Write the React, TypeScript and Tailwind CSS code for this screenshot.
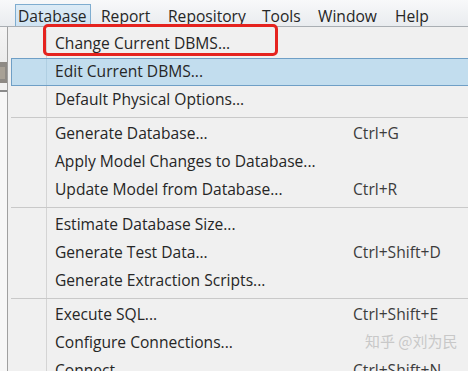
import React from "react";

type Item = { label: string; shortcut?: string; highlight?: boolean } | { sep: true; h: number };

const items: Item[] = [
  { label: "Change Current DBMS..." },
  { label: "Edit Current DBMS...", highlight: true },
  { label: "Default Physical Options..." },
  { sep: true, h: 6 },
  { label: "Generate Database...", shortcut: "Ctrl+G" },
  { label: "Apply Model Changes to Database..." },
  { label: "Update Model from Database...", shortcut: "Ctrl+R" },
  { sep: true, h: 7 },
  { label: "Estimate Database Size..." },
  { label: "Generate Test Data...", shortcut: "Ctrl+Shift+D" },
  { label: "Generate Extraction Scripts..." },
  { sep: true, h: 6 },
  { label: "Execute SQL...", shortcut: "Ctrl+Shift+E" },
  { label: "Configure Connections..." },
  { label: "Connect", shortcut: "Ctrl+Shift+N" },
];

const menus = [
  { t: "Database", w: "w-[84px]", active: true },
  { t: "Report", w: "w-[67px]" },
  { t: "Repository", w: "w-[94px]" },
  { t: "Tools", w: "w-[56px]" },
  { t: "Window", w: "w-[77px]" },
  { t: "Help", w: "w-[45px]" },
];

export default function App() {
  const font = { fontFamily: '"Open Sans", "Noto Sans", "Noto Sans CJK SC", sans-serif' };
  return (
    <div className="relative w-[468px] h-[371px] overflow-hidden bg-[#f0f0f0] text-[15.6px] text-[#262626]" style={font}>
      {/* menu bar */}
      <div className="flex h-[27px] items-end pl-[15px] bg-gradient-to-b from-[#f8f9fa] to-[#e9ecef] border-b border-[#a9aeb3]">
        {menus.map((m) => (
          <div key={m.t} className={`${m.w} shrink-0 h-[22px] flex`}>
            <div
              className={`h-full flex items-center pl-[2px] pt-[3px] leading-none ${
                m.active ? "w-[76px] bg-gradient-to-b from-[#dcebf6] to-[#cfe3f2] border border-b-0 border-[#7fadd0]" : ""
              }`}
            >
              <span className="whitespace-nowrap">{m.t}</span>
            </div>
          </div>
        ))}
      </div>

      <div className="flex h-[344px]">
        {/* left background strip */}
        <div className="w-[7px] shrink-0 flex flex-col">
          <div className="h-[35px] shrink-0 bg-gradient-to-b from-[#f4f4f4] to-[#ececec]" />
          <div className="h-[21px] shrink-0 bg-[#8e8a85] flex items-center">
            <div className="w-[5px] h-[12px] bg-[#a8a196]" />
          </div>
          <div className="h-[7px] shrink-0 bg-[#f2f2f2]" />
          <div className="h-[2px] shrink-0 bg-[#8a8a8a]" />
          <div className="flex-1 bg-[#f7f7f7]" />
        </div>

        {/* dropdown menu */}
        <div className="flex-1 border-l border-[#a0a0a0] bg-[#f0f0f0] pt-[3px] flex flex-col">
          {items.map((it, i) =>
            "sep" in it ? (
              <div key={i} className="shrink-0 flex flex-col" style={{ height: it.h }}>
                <div className="flex-1 flex">
                  <div className="w-[39px] border-r border-[#d4d4d4]" />
                </div>
                <div className="ml-[3px] h-px bg-[#c9c9c9]" />
                <div className="flex-1 flex">
                  <div className="w-[39px] border-r border-[#d4d4d4]" />
                </div>
              </div>
            ) : it.highlight ? (
              <div key={i} className="h-[28px] shrink-0 ml-[3px] flex items-center border border-r-0 border-[#6f9fc6] bg-[#c2ddee]">
                <div className="w-[35px] h-full border-r border-[#b0cfe2]" />
                <div className="pl-[8px] whitespace-nowrap">{it.label}</div>
              </div>
            ) : (
              <div key={i} className="h-[28px] shrink-0 flex items-center">
                <div className="w-[39px] h-full border-r border-[#d4d4d4]" />
                <div className="pl-[8px] w-[306px] whitespace-nowrap">{it.label}</div>
                {it.shortcut && <div className="whitespace-nowrap text-[#3c3c3c]">{it.shortcut}</div>}
              </div>
            )
          )}
        </div>
      </div>

      {/* red annotation box */}
      <div className="absolute left-[43px] top-[24px] w-[235px] h-[32px] border-[3px] border-[#e5231f] rounded-[5px]" />

      {/* watermark */}
      <div className="absolute left-[365px] top-[330px] text-[15px] text-[#c8c8c8] whitespace-nowrap" style={{ fontFamily: '"Noto Sans CJK SC", sans-serif' }}>
        知乎 @刘为民
      </div>
    </div>
  );
}
